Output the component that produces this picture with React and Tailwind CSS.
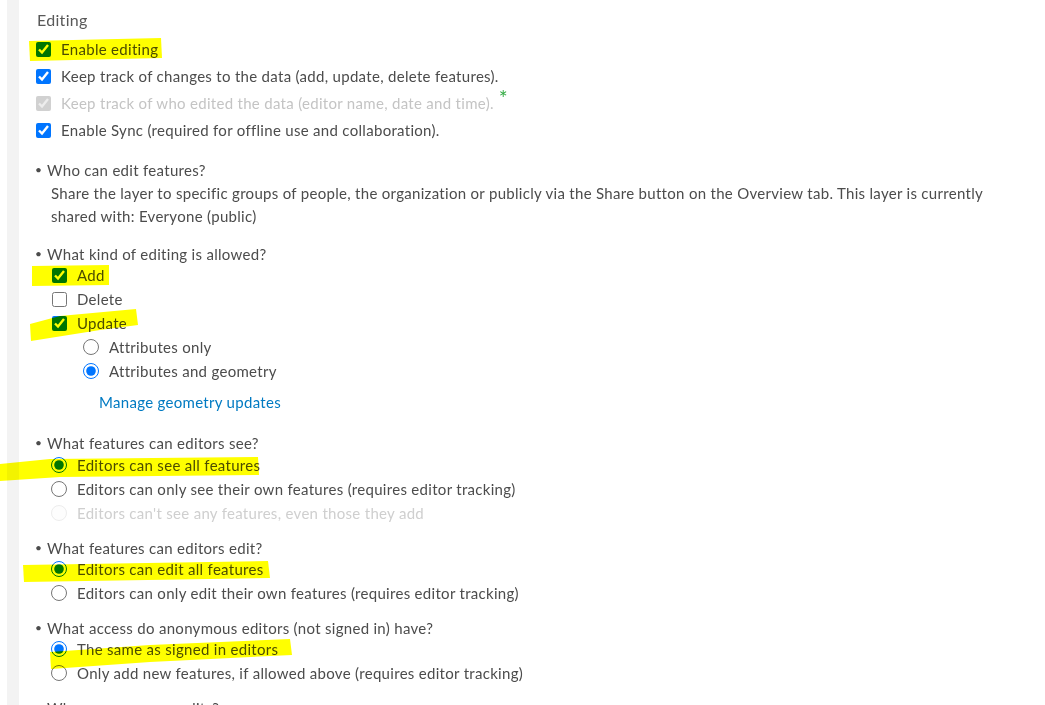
import React from "react";

const CheckRow = ({ label, checked, disabled, star }) => (
    <label className={"flex items-center h-[27px] gap-[10px] " + (disabled ? "text-[#c4c4c4]" : "text-[#4c4c4c]")}>
        <input type="checkbox" checked={checked} disabled={disabled} readOnly className="w-[15px] h-[15px] m-0 ml-[1px] accent-[#0075ff]" />
        <span>{label}</span>
        {star && <span className="text-[#35ac46] text-[21px] leading-none -ml-[5px] -mt-[12px]">*</span>}
    </label>
);

const Option = ({ type = "checkbox", label, checked, disabled, indent }) => (
    <label className={"flex items-center h-[24px] gap-[10px] " + (indent ? "pl-[48px] " : "pl-[16px] ") + (disabled ? "text-[#cfcfcf]" : "text-[#4c4c4c]")}>
        <input type={type} checked={checked} disabled={disabled} readOnly className={(type === "radio" ? "w-[16px] h-[16px] " : "w-[15px] h-[15px] ml-[1px] ") + "m-0 accent-[#0075ff] " + (disabled ? "opacity-40" : "")} />
        <span>{label}</span>
    </label>
);

const Question = ({ children, className = "" }) => (
    <div className={"flex h-[18px] items-center text-[#4c4c4c] " + className}>
        <span className="w-[12px] text-[12px]">•</span>
        <span>{children}</span>
    </div>
);

export default function App() {
    return (
        <div className="relative h-[705px] overflow-hidden bg-white flex" style={{ fontFamily: "Lato, 'Open Sans', sans-serif" }}>
            <div className="w-[12px] ml-[7px] bg-[#f3f3f3] shrink-0" />
            <div className="pl-[16px] pr-[20px] text-[15px] tracking-[0.3px] flex-1">
                <div className="pt-[8px] h-[32px] leading-[24px] text-[16px] text-[#595959] pl-[2px]">Editing</div>
                <div className="mt-[4px]">
                    <CheckRow label="Enable editing" checked />
                    <CheckRow label="Keep track of changes to the data (add, update, delete features)." checked />
                    <CheckRow label="Keep track of who edited the data (editor name, date and time)." checked disabled star />
                    <CheckRow label="Enable Sync (required for offline use and collaboration)." checked />
                </div>

                <Question className="mt-[17px]">Who can edit features?</Question>
                <p className="mt-[3px] pl-[16px] leading-[23px] text-[#4c4c4c]">
                    Share the layer to specific groups of people, the organization or publicly via the Share button on the Overview tab. This layer is currently shared with: Everyone (public)
                </p>

                <Question className="mt-[17px]">What kind of editing is allowed?</Question>
                <Option label="Add" checked />
                <Option label="Delete" />
                <Option label="Update" checked />
                <Option type="radio" label="Attributes only" indent />
                <Option type="radio" label="Attributes and geometry" checked indent />
                <div className="mt-[7px] h-[24px] leading-[24px] pl-[64px] text-[#007ac2]">Manage geometry updates</div>

                <Question className="mt-[20px]">What features can editors see?</Question>
                <div className="mt-[1px]">
                    <Option type="radio" label="Editors can see all features" checked />
                    <Option type="radio" label="Editors can only see their own features (requires editor tracking)" />
                    <Option type="radio" label="Editors can't see any features, even those they add" disabled />
                </div>

                <Question className="mt-[14px]">What features can editors edit?</Question>
                <Option type="radio" label="Editors can edit all features" checked />
                <Option type="radio" label="Editors can only edit their own features (requires editor tracking)" />

                <Question className="mt-[14px]">What access do anonymous editors (not signed in) have?</Question>
                <Option type="radio" label="The same as signed in editors" checked />
                <Option type="radio" label="Only add new features, if allowed above (requires editor tracking)" />

                <Question className="mt-[14px]">Who can see more edits?</Question>
            </div>

            {/* marker highlights drawn over the screenshot */}
            <svg className="absolute left-0 top-0 pointer-events-none mix-blend-multiply" width="1045" height="705">
                <g fill="#ffff00">
                    <polygon points="29,41 161,38 162,58 30,61" />
                    <polygon points="32,266 109,265 109,285 32,286" />
                    <polygon points="30,324 60,316 136,309 138,325 100,330 31,341" />
                    <polygon points="0,464 50,459 258,457 259,475 60,477 0,481" />
                    <polygon points="23,565 268,561 270,578 24,582" />
                    <polygon points="50,652 150,645 290,639 292,655 150,662 51,669" />
                </g>
            </svg>
        </div>
    );
}
